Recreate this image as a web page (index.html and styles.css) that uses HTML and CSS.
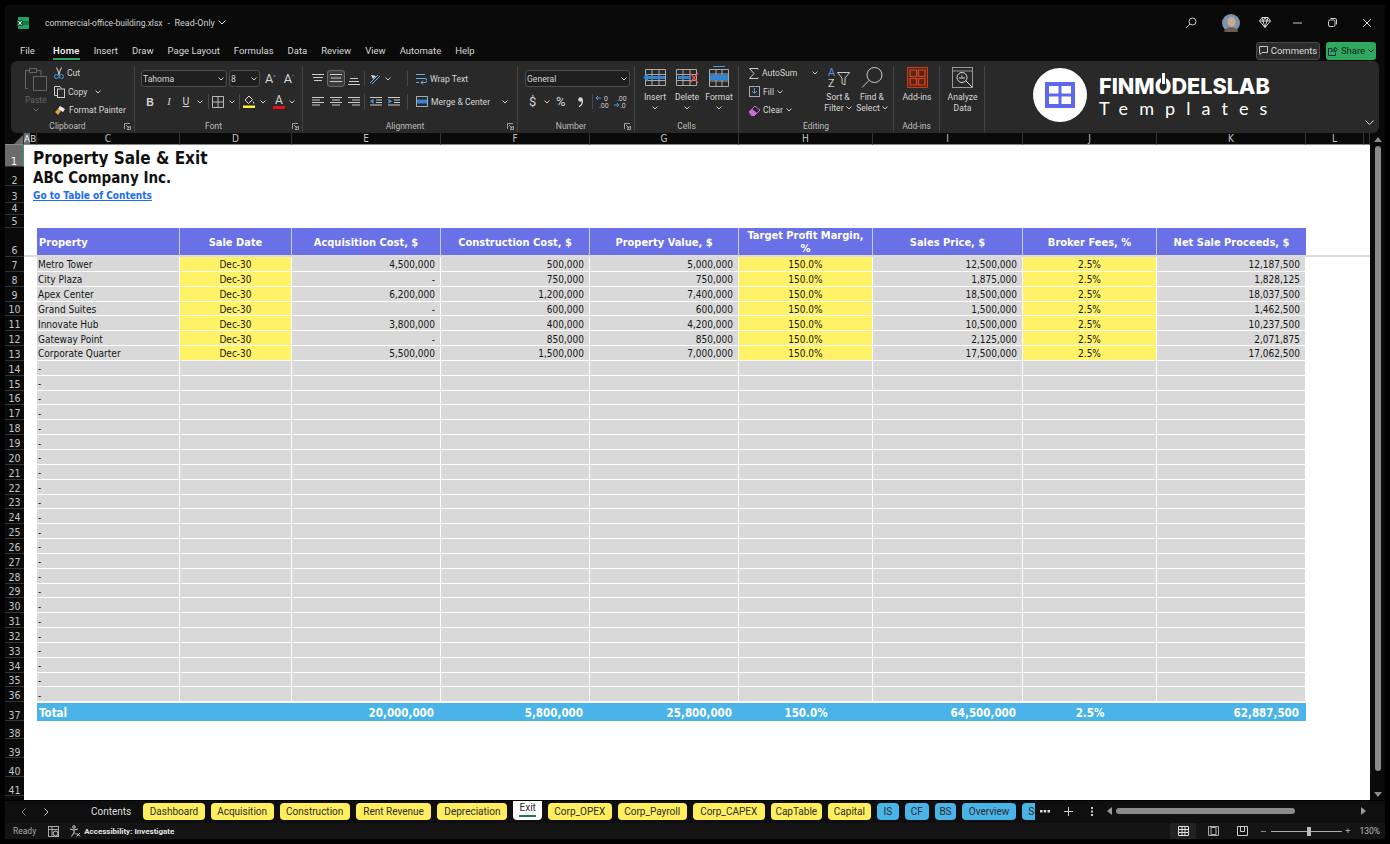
FILE: index.html
```html
<!DOCTYPE html>
<html lang="en">
<head>
  <meta charset="UTF-8">
  <title>commercial-office-building.xlsx</title>
  <link rel="stylesheet" href="styles.css">
</head>
<body>
  <div class="window">

    <!-- title bar -->
    <header class="titlebar">
      <svg class="xl-icon" width="12" height="12" viewBox="0 0 12 12"><rect x="1" width="11" height="12" rx="1" fill="#21a366"/><rect x="1" y="4" width="11" height="4" fill="#107c41"/><rect y="3" width="6" height="6" fill="#185c37"/><path d="M1.5 4.2l3 3.6M4.5 4.2l-3 3.6" stroke="#fff" fill="none"/></svg>
      <span class="doc-name">commercial-office-building.xlsx</span>
      <span class="doc-state">-&nbsp; Read-Only</span>
      <svg class="chev-big" width="8" height="5" viewBox="0 0 8 5"><path d="M.5.5L4 4 7.5.5" fill="none" stroke="#ddd"/></svg>
      <div class="title-right">
        <svg class="tb-search" width="12" height="12" viewBox="0 0 12 12"><circle cx="7.5" cy="4.5" r="3.5" fill="none" stroke="#ccc"/><path d="M5 7l-4 4" stroke="#ccc"/></svg>
        <svg class="tb-avatar" width="18" height="18" viewBox="0 0 18 18"><circle cx="9" cy="9" r="9" fill="#7d95ad"/><ellipse cx="9.5" cy="8" rx="4" ry="5" fill="#c9ab93"/><path d="M2 17c2-5 12-5 14 0a9 9 0 0 1-14 0z" fill="#6e5b50"/></svg>
        <svg class="tb-gem" width="12" height="11" viewBox="0 0 12 11"><path d="M3 .5h6L11.500 4 6 10.500.5 4zM.5 4h11M4 4l2 6.500L8 4M3 .5L4 4l2-3.500L8 4 9 .5" fill="none" stroke="#e6e6e6" stroke-width=".9"/></svg>
        <svg class="tb-min" width="9" height="2" viewBox="0 0 9 2"><path d="M0 1h9" stroke="#ccc"/></svg>
        <svg class="tb-max" width="9" height="9" viewBox="0 0 9 9"><rect x=".5" y="2" width="6.500" height="6.500" rx="1.500" fill="none" stroke="#ccc"/><path d="M2.500.5h4.500a1.500 1.500 0 0 1 1.500 1.500v4.500" fill="none" stroke="#ccc"/></svg>
        <svg class="tb-close" width="10" height="10" viewBox="0 0 10 10"><path d="M1 1l8 8M9 1l-8 8" stroke="#ddd"/></svg>
      </div>
    </header>

    <!-- menu tabs -->
    <nav class="menubar">
      <a class="m-file">File</a>
      <a class="m-home">Home</a>
      <a>Insert</a>
      <a>Draw</a>
      <a>Page Layout</a>
      <a>Formulas</a>
      <a>Data</a>
      <a>Review</a>
      <a>View</a>
      <a>Automate</a>
      <a>Help</a>
      <div class="menu-actions">
        <button class="btn-comments"><svg width="9" height="9" viewBox="0 0 9 9"><path d="M.5.5h8v6H3L1 8.500V6.500H.5z" fill="none" stroke="#ddd" stroke-width=".9"/></svg>Comments</button>
        <button class="btn-share"><svg width="10" height="10" viewBox="0 0 10 10"><path d="M4 2.500H.5v7h7V6.500M3 6c.5-2 2-3 4-3V1l2.500 2.500L7 6V4.500C5.500 4.500 4 5 3 6z" fill="none" stroke="#123" stroke-width=".9"/></svg>Share<svg width="6" height="4" viewBox="0 0 6 4"><path d="M.5.5L3 3 5.500.5" fill="none" stroke="#123"/></svg></button>
      </div>
    </nav>

    <!-- ribbon -->
    <section class="ribbon">

      <div class="group g-clipboard">
        <div class="g-body">
          <div class="paste">
            <svg width="22" height="23" viewBox="0 0 22 23"><path d="M3 20.500H.5v-18h4M12 2.500h4v5" fill="none" stroke="#666"/><rect x="4.500" y=".5" width="7" height="4" fill="none" stroke="#666"/><rect x="8.500" y="8.500" width="13" height="14" fill="none" stroke="#666"/></svg>
            <span>Paste</span>
            <svg width="6" height="4" viewBox="0 0 6 4"><path d="M.5.5L3 3 5.500.5" fill="none" stroke="#666"/></svg>
          </div>
          <div class="clip-rows">
            <div class="clip-row"><svg width="10" height="12" viewBox="0 0 10 12"><path d="M2.500.5l3 7M7.500.5l-3 7" stroke="#ddd" fill="none"/><circle cx="2.500" cy="9.500" r="2" fill="none" stroke="#4a9be0"/><circle cx="7.500" cy="9.500" r="2" fill="none" stroke="#4a9be0"/></svg>Cut</div>
            <div class="clip-row"><svg width="11" height="12" viewBox="0 0 11 12"><path d="M3 9.500H.5v-9H6l1.500 2" fill="none" stroke="#ccc"/><rect x="3.500" y="3" width="7" height="8.500" fill="none" stroke="#ccc"/></svg>Copy<svg class="copy-chev" width="6" height="4" viewBox="0 0 6 4"><path d="M.5.5L3 3 5.500.5" fill="none" stroke="#ccc"/></svg></div>
            <div class="clip-row"><svg width="12" height="11" viewBox="0 0 12 11"><path d="M6 1l5 3-2 3-5-3z" fill="#eee"/><path d="M4 4L1 7l3 3 3-4z" fill="#e8a33d"/></svg>Format Painter</div>
          </div>
        </div>
        <div class="g-label">Clipboard<svg class="launcher" width="7" height="7" viewBox="0 0 7 7"><path d="M.5 6V.5H6M6.500 3v3.500H3M2 2l3 3M5 3v2H3" fill="none" stroke="#bbb" stroke-width=".8"/></svg></div>
      </div>

      <div class="group g-font">
        <div class="g-body rows">
          <div class="row r-font1">
            <div class="combo c-font">Tahoma<svg width="6" height="4" viewBox="0 0 6 4"><path d="M.5.5L3 3 5.500.5" fill="none" stroke="#ccc"/></svg></div>
            <div class="combo c-size">8<svg width="6" height="4" viewBox="0 0 6 4"><path d="M.5.5L3 3 5.500.5" fill="none" stroke="#ccc"/></svg></div>
            <span class="grow-a">A<small>^</small></span>
            <span class="shrink-a">A<small>ˇ</small></span>
          </div>
          <div class="row r-font2">
            <b>B</b><i>I</i><u>U</u>
            <svg class="chev c-u" width="6" height="4" viewBox="0 0 6 4"><path d="M.5.5L3 3 5.500.5" fill="none" stroke="#ccc"/></svg>
            <span class="vsep"></span>
            <svg width="12" height="12" viewBox="0 0 12 12"><path d="M.5.5h11v11H.5zM6 .5v11M.5 6h11" fill="none" stroke="#bbb"/></svg>
            <svg class="chev" width="6" height="4" viewBox="0 0 6 4"><path d="M.5.5L3 3 5.500.5" fill="none" stroke="#ccc"/></svg>
            <span class="vsep"></span>
            <svg width="12" height="13" viewBox="0 0 12 13"><path d="M6 1L2 5l3.500 3.500 4-4zM10 6.500l1 2" fill="none" stroke="#ddd"/><rect y="10.500" width="12" height="2.500" fill="#ffef3a"/></svg>
            <svg class="chev" width="6" height="4" viewBox="0 0 6 4"><path d="M.5.5L3 3 5.500.5" fill="none" stroke="#ccc"/></svg>
            <span class="color-a">A</span>
            <svg class="chev c-a" width="6" height="4" viewBox="0 0 6 4"><path d="M.5.5L3 3 5.500.5" fill="none" stroke="#ccc"/></svg>
          </div>
        </div>
        <div class="g-label">Font<svg class="launcher" width="7" height="7" viewBox="0 0 7 7"><path d="M.5 6V.5H6M6.500 3v3.500H3M2 2l3 3M5 3v2H3" fill="none" stroke="#bbb" stroke-width=".8"/></svg></div>
      </div>

      <div class="group g-align">
        <div class="g-body rows">
          <div class="row r-al1">
            <span class="al-btn"><svg width="12" height="9" viewBox="0 0 12 9"><path d="M0 .5h12M1 3.500h10M2 6.500h8" stroke="#ccc"/></svg></span>
            <span class="al-btn on"><svg width="12" height="9" viewBox="0 0 12 9"><path d="M0 .5h12M1 4h10M0 7.500h12" stroke="#ccc"/></svg></span>
            <span class="al-btn low"><svg width="12" height="9" viewBox="0 0 12 9"><path d="M2 2.500h8M1 5.500h10M0 8.500h12" stroke="#ccc"/></svg></span>
            <span class="vsep"></span>
            <svg class="al-orient" width="12" height="12" viewBox="0 0 12 12"><path d="M1 10l8-8M3 11l8-8" stroke="#6ab0e8" fill="none"/><path d="M2 2l5 1-3 3z" fill="#ddd"/></svg>
            <svg class="chev" width="6" height="4" viewBox="0 0 6 4"><path d="M.5.5L3 3 5.500.5" fill="none" stroke="#ccc"/></svg>
            <span class="vsep"></span>
            <span class="text-btn"><svg width="11" height="12" viewBox="0 0 11 12"><path d="M0 1.500h9M0 5.500h9a2 2 0 0 1 0 4H5M7 7.500L5 9.500l2 2M0 9.500h3" fill="none" stroke="#6ab0e8"/></svg>Wrap Text</span>
          </div>
          <div class="row r-al2">
            <span class="al-btn"><svg width="12" height="9" viewBox="0 0 12 9"><path d="M0 .5h12M0 3h8M0 5.500h12M0 8h8" stroke="#ccc"/></svg></span>
            <span class="al-btn"><svg width="12" height="9" viewBox="0 0 12 9"><path d="M0 .5h12M2 3h8M0 5.500h12M2 8h8" stroke="#ccc"/></svg></span>
            <span class="al-btn"><svg width="12" height="9" viewBox="0 0 12 9"><path d="M0 .5h12M4 3h8M0 5.500h12M4 8h8" stroke="#ccc"/></svg></span>
            <span class="vsep"></span>
            <svg class="al-indent" width="12" height="9" viewBox="0 0 12 9"><path d="M0 .5h12M6 3h6M6 5.500h6M0 8h12" stroke="#ccc"/><path d="M0 4.200l3.500-2.500v5z" fill="#4a9be0"/></svg>
            <svg class="al-indent" width="12" height="9" viewBox="0 0 12 9"><path d="M0 .5h12M6 3h6M6 5.500h6M0 8h12" stroke="#ccc"/><path d="M4 4.200L.5 1.700v5z" fill="#4a9be0"/></svg>
            <span class="vsep"></span>
            <span class="text-btn merge"><svg width="12" height="11" viewBox="0 0 12 11"><rect x=".5" y=".5" width="11" height="10" fill="none" stroke="#aaa"/><rect x="1" y="3.500" width="10" height="4" fill="#2f86d6"/></svg>Merge &amp; Center<svg class="chev" width="6" height="4" viewBox="0 0 6 4"><path d="M.5.5L3 3 5.500.5" fill="none" stroke="#ccc"/></svg></span>
          </div>
        </div>
        <div class="g-label">Alignment<svg class="launcher" width="7" height="7" viewBox="0 0 7 7"><path d="M.5 6V.5H6M6.500 3v3.500H3M2 2l3 3M5 3v2H3" fill="none" stroke="#bbb" stroke-width=".8"/></svg></div>
      </div>

      <div class="group g-number">
        <div class="g-body rows">
          <div class="row"><div class="combo c-num">General<svg width="6" height="4" viewBox="0 0 6 4"><path d="M.5.5L3 3 5.500.5" fill="none" stroke="#ccc"/></svg></div></div>
          <div class="row r-num2">
            <span class="sym s-dollar">$</span>
            <svg class="chev" width="6" height="4" viewBox="0 0 6 4"><path d="M.5.5L3 3 5.500.5" fill="none" stroke="#ccc"/></svg>
            <span class="sym s-pct">%</span>
            <svg class="s-comma" width="5" height="10" viewBox="0 0 5 10"><circle cx="2.500" cy="2.500" r="2.300" fill="#d6d6d6"/><path d="M4.600 3C4.600 6 3.500 8.500 1 9.800" fill="none" stroke="#d6d6d6" stroke-width="1.300"/></svg>
            <span class="vsep"></span>
            <svg class="dec d-inc" width="14" height="13" viewBox="0 0 14 13" overflow="visible"><path d="M0 3h5M2 1L0 3l2 2" fill="none" stroke="#4a9be0"/><text x="8" y="6" font-size="7" fill="#ccc" font-family="Roboto">0</text><text x="3" y="12.500" font-size="7" fill="#ccc" font-family="Roboto">.00</text></svg>
            <svg class="dec d-dec" width="14" height="13" viewBox="0 0 14 13" overflow="visible"><text x="3" y="6" font-size="7" fill="#ccc" font-family="Roboto">.00</text><path d="M0 10h5M3 8l2 2-2 2" fill="none" stroke="#4a9be0"/><text x="6" y="12.500" font-size="7" fill="#ccc" font-family="Roboto">.0</text></svg>
          </div>
        </div>
        <div class="g-label">Number<svg class="launcher" width="7" height="7" viewBox="0 0 7 7"><path d="M.5 6V.5H6M6.500 3v3.500H3M2 2l3 3M5 3v2H3" fill="none" stroke="#bbb" stroke-width=".8"/></svg></div>
      </div>

      <div class="group g-cells">
        <div class="g-body big-row">
          <div class="big-btn">
            <svg width="24" height="22" viewBox="0 0 24 22"><path d="M2.500 3.500h20v16h-20zM2.500 8.500h20M2.500 14.500h20M9 3.500v16M16 3.500v16" fill="none" stroke="#aaa"/><path d="M0 11.500l5-4v2.500h17v3H5v2.500z" fill="#2f86d6"/></svg>
            <span>Insert</span>
            <svg width="6" height="4" viewBox="0 0 6 4"><path d="M.5.5L3 3 5.500.5" fill="none" stroke="#ccc"/></svg>
          </div>
          <div class="big-btn">
            <svg width="24" height="22" viewBox="0 0 24 22"><path d="M1.500 3.500h20v16h-20zM1.500 8.500h20M1.500 14.500h20M8 3.500v16M15 3.500v16" fill="none" stroke="#aaa"/><rect x="3" y="10" width="13" height="3" fill="#2f86d6"/><path d="M15 7l8 10M23 7l-8 10" stroke="#e0574a" stroke-width="1.300"/></svg>
            <span>Delete</span>
            <svg width="6" height="4" viewBox="0 0 6 4"><path d="M.5.5L3 3 5.500.5" fill="none" stroke="#ccc"/></svg>
          </div>
          <div class="big-btn b-format">
            <svg width="22" height="22" viewBox="0 0 22 22"><path d="M5 .5h12" stroke="#4a9be0"/><path d="M1.500 3.500h19v17h-19zM1.500 8h19M1.500 15h19M8 3.500v17M14 3.500v17" fill="none" stroke="#aaa"/><rect x="2" y="9" width="18" height="5" fill="#2f86d6"/></svg>
            <span>Format</span>
            <svg width="6" height="4" viewBox="0 0 6 4"><path d="M.5.5L3 3 5.500.5" fill="none" stroke="#ccc"/></svg>
          </div>
        </div>
        <div class="g-label">Cells</div>
      </div>

      <div class="group g-editing">
        <div class="g-body big-row">
          <div class="edit-rows">
            <div class="clip-row"><svg width="10" height="11" viewBox="0 0 10 11"><path d="M9 1.500V.5H.5L5 5.500.5 10.500H9V9.500" fill="none" stroke="#ccc"/></svg>AutoSum<svg class="sum-chev" width="6" height="4" viewBox="0 0 6 4"><path d="M.5.5L3 3 5.500.5" fill="none" stroke="#ccc"/></svg></div>
            <div class="clip-row"><svg width="11" height="11" viewBox="0 0 11 11"><rect x=".5" y=".5" width="10" height="10" fill="none" stroke="#aaa"/><path d="M5.500 2v5M3 5l2.500 2.500L8 5" fill="none" stroke="#4a9be0"/></svg>Fill<svg width="6" height="4" viewBox="0 0 6 4"><path d="M.5.5L3 3 5.500.5" fill="none" stroke="#ccc"/></svg></div>
            <div class="clip-row"><svg width="11" height="11" viewBox="0 0 11 11"><path d="M0 7l6-6 5 4-6 6H3z" fill="none" stroke="#c86dd7"/><path d="M0 7l3-3 5 4-3 3H3z" fill="#c86dd7"/></svg>Clear<svg width="6" height="4" viewBox="0 0 6 4"><path d="M.5.5L3 3 5.500.5" fill="none" stroke="#ccc"/></svg></div>
          </div>
          <div class="big-btn b-sort">
            <svg width="23" height="22" viewBox="0 0 23 22" overflow="visible"><text x="1" y="10" font-size="11" fill="#4a9be0" font-family="Roboto">A</text><text x="1" y="21" font-size="11" fill="#ccc" font-family="Roboto">Z</text><path d="M10.500 6.500h12L18 12v7l-3-1.500V12z" fill="none" stroke="#ccc"/></svg>
            <span>Sort &amp;</span>
            <span>Filter <svg width="6" height="4" viewBox="0 0 6 4"><path d="M.5.5L3 3 5.500.5" fill="none" stroke="#ccc"/></svg></span>
          </div>
          <div class="big-btn b-find">
            <svg width="22" height="22" viewBox="0 0 22 22"><circle cx="13.500" cy="9" r="7.500" fill="none" stroke="#ccc"/><path d="M8 14.500L1 21.500" stroke="#ccc"/></svg>
            <span>Find &amp;</span>
            <span>Select <svg width="6" height="4" viewBox="0 0 6 4"><path d="M.5.5L3 3 5.500.5" fill="none" stroke="#ccc"/></svg></span>
          </div>
        </div>
        <div class="g-label">Editing</div>
      </div>

      <div class="group g-addins">
        <div class="g-body big-row">
          <div class="big-btn b-wide">
            <svg width="21" height="22" viewBox="0 0 21 22"><path d="M.5 1.500h20v20H.5z" fill="#5d2413" stroke="#c2401c"/><path d="M3 4h6.500v6.500H3zM11.500 4H18v6.500h-6.500zM3 12.500h6.500V19H3zM11.500 12.500H18V19h-6.500z" fill="none" stroke="#d2492a" stroke-width="1.200"/></svg>
            <span>Add-ins</span>
          </div>
        </div>
        <div class="g-label">Add-ins</div>
      </div>

      <div class="group g-analyze">
        <div class="g-body big-row">
          <div class="big-btn b-wide">
            <svg width="21" height="22" viewBox="0 0 21 22"><rect x=".5" y="1.500" width="20" height="20" fill="none" stroke="#999"/><path d="M.5 5h20" stroke="#999"/><circle cx="10" cy="11.500" r="5" fill="none" stroke="#ddd"/><path d="M8 13v-2M10 13V9.500M12 13v-2M14 15l6 6" stroke="#ddd"/></svg>
            <span>Analyze</span>
            <span>Data</span>
          </div>
        </div>
      </div>

      <div class="brand">
        <div class="brand-badge">
          <svg width="30" height="26" viewBox="0 0 30 26"><rect width="30" height="26" fill="#5d68ee"/><rect x="4" y="4" width="9.500" height="7.500" fill="#fff"/><rect x="16.500" y="4" width="9.500" height="7.500" fill="#fff"/><rect x="4" y="14.500" width="9.500" height="7.500" fill="#fff"/><rect x="16.500" y="14.500" width="9.500" height="7.500" fill="#fff"/></svg>
        </div>
        <div class="brand-text">
          <div class="brand-name">FINM<span class="power">O</span>DELSLAB</div>
          <div class="brand-sub">Templates</div>
        </div>
        <svg class="collapse" width="9" height="5" viewBox="0 0 9 5"><path d="M.5.5l4 4 4-4" fill="none" stroke="#ddd"/></svg>
      </div>
    </section>

    <!-- worksheet -->
    <main class="sheet">
      <div class="grid-wrap">
        <table class="grid">
          <colgroup>
            <col class="w-rh"><col class="w-ab"><col class="w-c"><col class="w-d"><col class="w-e"><col class="w-f"><col class="w-g"><col class="w-h"><col class="w-i"><col class="w-j"><col class="w-k"><col class="w-l"><col class="w-m">
          </colgroup>
          <tr class="letters">
            <th class="corner"><svg width="9" height="9" viewBox="0 0 9 9"><path d="M9 0v9H0z" fill="#6a6a6a"/></svg></th>
            <th class="ab"><span>A</span>B</th><th>C</th><th>D</th><th>E</th><th>F</th><th>G</th><th>H</th><th>I</th><th>J</th><th>K</th><th>L</th><th></th>
          </tr>
          <tr class="r1"><th class="rn sel">1</th><td colspan="12" class="t1">Property Sale &amp; Exit</td></tr>
          <tr class="r2"><th class="rn">2</th><td colspan="12" class="t2">ABC Company Inc.</td></tr>
          <tr class="r3"><th class="rn">3</th><td colspan="12" class="t3"><a>Go to Table of Contents</a></td></tr>
          <tr class="r4"><th class="rn">4</th><td colspan="12"></td></tr>
          <tr class="r5"><th class="rn">5</th><td colspan="12"></td></tr>
          <tr class="r6"><th class="rn">6</th><td></td>
            <td class="hd left">Property</td><td class="hd">Sale Date</td><td class="hd">Acquisition Cost, $</td><td class="hd">Construction Cost, $</td><td class="hd">Property Value, $</td><td class="hd">Target Profit Margin,<br>%</td><td class="hd">Sales Price, $</td><td class="hd">Broker Fees, %</td><td class="hd">Net Sale Proceeds, $</td><td></td><td></td></tr>

          <tr class="dr"><th class="rn">7</th><td class="b"></td><td>Metro Tower</td><td class="in">Dec-30</td><td class="n">4,500,000</td><td class="n">500,000</td><td class="n">5,000,000</td><td class="in">150.0%</td><td class="n">12,500,000</td><td class="in">2.5%</td><td class="n">12,187,500</td><td class="b"></td><td class="b"></td></tr>
          <tr class="dr"><th class="rn">8</th><td class="b"></td><td>City Plaza</td><td class="in">Dec-30</td><td class="n">-</td><td class="n">750,000</td><td class="n">750,000</td><td class="in">150.0%</td><td class="n">1,875,000</td><td class="in">2.5%</td><td class="n">1,828,125</td><td class="b"></td><td class="b"></td></tr>
          <tr class="dr"><th class="rn">9</th><td class="b"></td><td>Apex Center</td><td class="in">Dec-30</td><td class="n">6,200,000</td><td class="n">1,200,000</td><td class="n">7,400,000</td><td class="in">150.0%</td><td class="n">18,500,000</td><td class="in">2.5%</td><td class="n">18,037,500</td><td class="b"></td><td class="b"></td></tr>
          <tr class="dr"><th class="rn">10</th><td class="b"></td><td>Grand Suites</td><td class="in">Dec-30</td><td class="n">-</td><td class="n">600,000</td><td class="n">600,000</td><td class="in">150.0%</td><td class="n">1,500,000</td><td class="in">2.5%</td><td class="n">1,462,500</td><td class="b"></td><td class="b"></td></tr>
          <tr class="dr"><th class="rn">11</th><td class="b"></td><td>Innovate Hub</td><td class="in">Dec-30</td><td class="n">3,800,000</td><td class="n">400,000</td><td class="n">4,200,000</td><td class="in">150.0%</td><td class="n">10,500,000</td><td class="in">2.5%</td><td class="n">10,237,500</td><td class="b"></td><td class="b"></td></tr>
          <tr class="dr"><th class="rn">12</th><td class="b"></td><td>Gateway Point</td><td class="in">Dec-30</td><td class="n">-</td><td class="n">850,000</td><td class="n">850,000</td><td class="in">150.0%</td><td class="n">2,125,000</td><td class="in">2.5%</td><td class="n">2,071,875</td><td class="b"></td><td class="b"></td></tr>
          <tr class="dr"><th class="rn">13</th><td class="b"></td><td>Corporate Quarter</td><td class="in">Dec-30</td><td class="n">5,500,000</td><td class="n">1,500,000</td><td class="n">7,000,000</td><td class="in">150.0%</td><td class="n">17,500,000</td><td class="in">2.5%</td><td class="n">17,062,500</td><td class="b"></td><td class="b"></td></tr>

          <tr class="dr"><th class="rn">14</th><td class="b"></td><td>-</td><td></td><td></td><td></td><td></td><td></td><td></td><td></td><td></td><td class="b"></td><td class="b"></td></tr>
          <tr class="dr"><th class="rn">15</th><td class="b"></td><td>-</td><td></td><td></td><td></td><td></td><td></td><td></td><td></td><td></td><td class="b"></td><td class="b"></td></tr>
          <tr class="dr"><th class="rn">16</th><td class="b"></td><td>-</td><td></td><td></td><td></td><td></td><td></td><td></td><td></td><td></td><td class="b"></td><td class="b"></td></tr>
          <tr class="dr"><th class="rn">17</th><td class="b"></td><td>-</td><td></td><td></td><td></td><td></td><td></td><td></td><td></td><td></td><td class="b"></td><td class="b"></td></tr>
          <tr class="dr"><th class="rn">18</th><td class="b"></td><td>-</td><td></td><td></td><td></td><td></td><td></td><td></td><td></td><td></td><td class="b"></td><td class="b"></td></tr>
          <tr class="dr"><th class="rn">19</th><td class="b"></td><td>-</td><td></td><td></td><td></td><td></td><td></td><td></td><td></td><td></td><td class="b"></td><td class="b"></td></tr>
          <tr class="dr"><th class="rn">20</th><td class="b"></td><td>-</td><td></td><td></td><td></td><td></td><td></td><td></td><td></td><td></td><td class="b"></td><td class="b"></td></tr>
          <tr class="dr"><th class="rn">21</th><td class="b"></td><td>-</td><td></td><td></td><td></td><td></td><td></td><td></td><td></td><td></td><td class="b"></td><td class="b"></td></tr>
          <tr class="dr"><th class="rn">22</th><td class="b"></td><td>-</td><td></td><td></td><td></td><td></td><td></td><td></td><td></td><td></td><td class="b"></td><td class="b"></td></tr>
          <tr class="dr"><th class="rn">23</th><td class="b"></td><td>-</td><td></td><td></td><td></td><td></td><td></td><td></td><td></td><td></td><td class="b"></td><td class="b"></td></tr>
          <tr class="dr"><th class="rn">24</th><td class="b"></td><td>-</td><td></td><td></td><td></td><td></td><td></td><td></td><td></td><td></td><td class="b"></td><td class="b"></td></tr>
          <tr class="dr"><th class="rn">25</th><td class="b"></td><td>-</td><td></td><td></td><td></td><td></td><td></td><td></td><td></td><td></td><td class="b"></td><td class="b"></td></tr>
          <tr class="dr"><th class="rn">26</th><td class="b"></td><td>-</td><td></td><td></td><td></td><td></td><td></td><td></td><td></td><td></td><td class="b"></td><td class="b"></td></tr>
          <tr class="dr"><th class="rn">27</th><td class="b"></td><td>-</td><td></td><td></td><td></td><td></td><td></td><td></td><td></td><td></td><td class="b"></td><td class="b"></td></tr>
          <tr class="dr"><th class="rn">28</th><td class="b"></td><td>-</td><td></td><td></td><td></td><td></td><td></td><td></td><td></td><td></td><td class="b"></td><td class="b"></td></tr>
          <tr class="dr"><th class="rn">29</th><td class="b"></td><td>-</td><td></td><td></td><td></td><td></td><td></td><td></td><td></td><td></td><td class="b"></td><td class="b"></td></tr>
          <tr class="dr"><th class="rn">30</th><td class="b"></td><td>-</td><td></td><td></td><td></td><td></td><td></td><td></td><td></td><td></td><td class="b"></td><td class="b"></td></tr>
          <tr class="dr"><th class="rn">31</th><td class="b"></td><td>-</td><td></td><td></td><td></td><td></td><td></td><td></td><td></td><td></td><td class="b"></td><td class="b"></td></tr>
          <tr class="dr"><th class="rn">32</th><td class="b"></td><td>-</td><td></td><td></td><td></td><td></td><td></td><td></td><td></td><td></td><td class="b"></td><td class="b"></td></tr>
          <tr class="dr"><th class="rn">33</th><td class="b"></td><td>-</td><td></td><td></td><td></td><td></td><td></td><td></td><td></td><td></td><td class="b"></td><td class="b"></td></tr>
          <tr class="dr"><th class="rn">34</th><td class="b"></td><td>-</td><td></td><td></td><td></td><td></td><td></td><td></td><td></td><td></td><td class="b"></td><td class="b"></td></tr>
          <tr class="dr"><th class="rn">35</th><td class="b"></td><td>-</td><td></td><td></td><td></td><td></td><td></td><td></td><td></td><td></td><td class="b"></td><td class="b"></td></tr>
          <tr class="dr"><th class="rn">36</th><td class="b"></td><td>-</td><td></td><td></td><td></td><td></td><td></td><td></td><td></td><td></td><td class="b"></td><td class="b"></td></tr>

          <tr class="r37"><th class="rn">37</th><td></td><td class="tot left">Total</td><td class="tot"></td><td class="tot">20,000,000</td><td class="tot">5,800,000</td><td class="tot">25,800,000</td><td class="tot mid">150.0%</td><td class="tot">64,500,000</td><td class="tot mid">2.5%</td><td class="tot">62,887,500</td><td></td><td></td></tr>
          <tr class="r38"><th class="rn">38</th><td colspan="12"></td></tr>
          <tr class="r39"><th class="rn">39</th><td colspan="12"></td></tr>
          <tr class="r39"><th class="rn">40</th><td colspan="12"></td></tr>
          <tr class="r39"><th class="rn">41</th><td colspan="12"></td></tr>
          <tr class="r42"><th class="rn"></th><td colspan="12"></td></tr>
        </table>
      </div>
      <div class="vscroll">
        <svg width="8" height="5" viewBox="0 0 8 5"><path d="M4 0l4 5H0z" fill="#8a8a8a"/></svg>
        <div class="vthumb"></div>
        <svg width="8" height="5" viewBox="0 0 8 5"><path d="M4 5L0 0h8z" fill="#8a8a8a"/></svg>
      </div>
    </main>

    <!-- sheet tabs -->
    <footer class="tabbar">
      <svg class="nav-l" width="5" height="8" viewBox="0 0 5 8"><path d="M4.500.5L1 4l3.500 3.500" fill="none" stroke="#888"/></svg>
      <svg class="nav-r" width="5" height="8" viewBox="0 0 5 8"><path d="M.5.5L4 4 .5 7.500" fill="none" stroke="#ccc"/></svg>
      <div class="tabs">
        <span class="tab plain">Contents</span>
        <span class="tab y">Dashboard</span>
        <span class="tab y">Acquisition</span>
        <span class="tab y">Construction</span>
        <span class="tab y wide">Rent Revenue</span>
        <span class="tab y roomy">Depreciation</span>
        <span class="tab active"><em>Exit</em></span>
        <span class="tab y">Corp_OPEX</span>
        <span class="tab y">Corp_Payroll</span>
        <span class="tab y wide">Corp_CAPEX</span>
        <span class="tab y tight">CapTable</span>
        <span class="tab y snug">Capital</span>
        <span class="tab bl">IS</span>
        <span class="tab bl snug">CF</span>
        <span class="tab bl tight">BS</span>
        <span class="tab bl">Overview</span>
        <span class="tab bl">Summary</span>
      </div>
      <svg class="more" width="10" height="3" viewBox="0 0 10 3"><path d="M0 0h2.500v2.500H0zM3.700 0h2.500v2.500H3.700zM7.500 0H10v2.500H7.500z" fill="#ddd"/></svg>
      <svg class="plus" width="9" height="9" viewBox="0 0 9 9"><path d="M4.500 0v9M0 4.500h9" stroke="#ccc"/></svg>
      <svg class="kebab" width="2" height="9" viewBox="0 0 2 9"><path d="M0 0h2v2H0zM0 3.500h2v2H0zM0 7h2v2H0z" fill="#ccc"/></svg>
      <div class="hscroll">
        <svg width="5" height="8" viewBox="0 0 5 8"><path d="M0 4l5-4v8z" fill="#999"/></svg>
        <div class="hthumb"></div>
        <svg width="5" height="8" viewBox="0 0 5 8"><path d="M5 4L0 0v8z" fill="#999"/></svg>
      </div>
    </footer>

    <!-- status bar -->
    <div class="statusbar">
      <span class="st-ready">Ready</span>
      <svg class="st-macro" width="11" height="11" viewBox="0 0 11 11"><rect x=".5" y=".5" width="10" height="10" fill="none" stroke="#aaa"/><path d="M.5 3.500h10M4 .5v10" stroke="#aaa"/><circle cx="7.500" cy="7.500" r="2.500" fill="#222" stroke="#ccc"/></svg>
      <svg class="st-acc" width="12" height="12" viewBox="0 0 12 12"><circle cx="5" cy="2" r="1.300" fill="none" stroke="#ccc"/><path d="M1 4l4 1 4-1M5 5v2.500L2.500 11.500M5 7.500l2 2" fill="none" stroke="#ccc"/><path d="M7.500 8l3.500 3.500M11 8l-3.500 3.500" stroke="#ccc"/></svg>
      <span class="st-access">Accessibility: Investigate</span>
      <div class="st-right">
        <span class="view-on"><svg width="11" height="10" viewBox="0 0 11 10"><path d="M.5.5h10v9H.5zM.5 3.500h10M.5 6.500h10M4 .5v9M7 .5v9" fill="none" stroke="#ddd"/></svg></span>
        <svg class="view" width="11" height="10" viewBox="0 0 11 10"><path d="M.5.5h10v9H.5z" fill="none" stroke="#aaa"/><rect x="3" y="1.500" width="5" height="7" fill="none" stroke="#aaa"/></svg>
        <svg class="view" width="11" height="10" viewBox="0 0 11 10"><path d="M.5.5h10v9H.5zM3.500.5v5h4v-5" fill="none" stroke="#ccc"/></svg>
        <span class="zoom-minus"></span>
        <div class="slider"><i></i></div>
        <span class="zoom-plus">+</span>
        <span class="zoom-val">130%</span>
      </div>
    </div>
  </div>
</body>
</html>
```

FILE: styles.css
```css
* {
  box-sizing: border-box;
}

html, body {
  margin: 0;
  height: 844px;
  overflow: hidden;
  background: #000;
}

body {
  padding: 5px;
  font-family: Roboto, "Noto Sans", sans-serif;
  font-size: 9px;
  color: #d6d6d6;
}

svg {
  display: block;
  flex: none;
}

.window {
  width: 1380px;
  height: 834px;
  background: #0a0a0a;
  display: flex;
  flex-direction: column;
}

/* title bar */
.titlebar {
  height: 35px;
  flex: none;
  display: flex;
  align-items: center;
  padding-left: 12px;
  font-size: 9px;
  color: #d0d0d0;
}

.xl-icon {
  margin-right: 16px;
}

.doc-name {
  font-size: 8.500px;
}

.doc-state {
  margin-left: 5px;
}

.chev-big {
  margin-left: 3px;
}

.title-right {
  margin-left: auto;
  display: flex;
  align-items: center;
  padding-right: 13px;
}

.tb-avatar {
  margin-left: 25px;
}

.tb-gem {
  margin-left: 19px;
}

.tb-min {
  margin-left: 22px;
}

.tb-max {
  margin-left: 26px;
}

.tb-close {
  margin-left: 25px;
}

/* menu */
.menubar {
  height: 21px;
  flex: none;
  display: flex;
  align-items: center;
  gap: 14px;
  padding-left: 15px;
  font-size: 9.500px;
  color: #d8d8d8;
}

.menubar a {
  display: block;
  line-height: 15px;
}

.m-home {
  margin-left: 4px;
  color: #fff;
  font-weight: 500;
  letter-spacing: .3px;
  border-bottom: 2px solid #2ea35f;
  padding-top: 2px;
}

.menu-actions {
  margin-left: auto;
  display: flex;
  gap: 6px;
  padding-right: 9px;
}

.menu-actions button {
  height: 18px;
  display: flex;
  align-items: center;
  gap: 3px;
  border-radius: 3px;
  font-family: inherit;
  font-size: 9.500px;
  padding: 0;
  justify-content: center;
}

.btn-comments {
  width: 64px;
  background: #2b2b2b;
  border: 1px solid #4a4a4a;
  color: #dcdcdc;
}

.btn-share {
  width: 50px;
  background: #2fa860;
  border: none;
  color: #0f2a1a;
}

/* ribbon */
.ribbon {
  height: 72px;
  flex: none;
  margin: 0 6px;
  background: #292929;
  border-radius: 6px;
  display: flex;
  padding: 5px 0 1px;
  font-size: 8.600px;
  color: #d6d6d6;
}

.group {
  flex: none;
  display: flex;
  flex-direction: column;
  border-right: 1px solid #444;
}

.g-clipboard { width: 124px; }
.g-font { width: 168px; }
.g-align { width: 215px; }
.g-number { width: 117px; }
.g-cells { width: 104px; }
.g-editing { width: 155px; }
.g-addins { width: 46px; }
.g-analyze { width: 45px; }

.g-body {
  height: 54px;
  flex: none;
}

.g-label {
  height: 12px;
  line-height: 12px;
  text-align: center;
  font-size: 8.500px;
  color: #bdbdbd;
  position: relative;
}

.g-clipboard .g-label,
.g-font .g-label,
.g-align .g-label,
.g-number .g-label {
  padding-right: 10px;
}

.launcher {
  position: absolute;
  right: 3px;
  top: 3px;
}

.rows {
  display: flex;
  flex-direction: column;
  padding-top: 4px;
  gap: 6px;
}

.row {
  height: 17px;
  display: flex;
  align-items: center;
}

.chev {
  margin-left: 4px;
}

.vsep {
  width: 1px;
  height: 15px;
  background: #4a4a4a;
}

/* clipboard */
.g-clipboard .g-body {
  display: flex;
}

.paste {
  width: 43px;
  padding-left: 14px;
  padding-top: 2px;
  display: flex;
  flex-direction: column;
  color: #666;
  font-size: 8.500px;
}

.paste span {
  line-height: 12px;
  margin-top: 3px;
}

.paste svg:last-child {
  margin: 2px 0 0 8px;
}

.clip-rows {
  margin-top: -2px;
  display: flex;
  flex-direction: column;
}

.clip-row {
  height: 18.500px;
  display: flex;
  align-items: center;
  gap: 3px;
  white-space: nowrap;
}

.copy-chev {
  margin-left: 5px;
}

/* font */
.g-font .rows {
  padding-left: 6px;
}

.combo {
  height: 17px;
  border: 1px solid #4d4d4d;
  border-radius: 3px;
  background: #1f1f1f;
  display: flex;
  align-items: center;
  justify-content: space-between;
  padding: 0 2px 0 1px;
  font-size: 8.600px;
}

.c-font { width: 86px; }
.c-size { width: 31px; margin-left: 2px; }
.c-num { width: 105px; margin-left: 7px; }

.grow-a, .shrink-a {
  font-size: 12.500px;
  color: #d6d6d6;
}

.grow-a { margin-left: 5px; }
.shrink-a { margin-left: 8px; }

.grow-a small, .shrink-a small {
  font-size: 6px;
  color: #6ab0e8;
  vertical-align: 4px;
}

.r-font2 {
  padding-left: 5px;
  font-size: 10.500px;
}

.r-font2 b {
  width: 8px;
  text-align: center;
  font-family: "Liberation Sans", sans-serif;
}

.r-font2 i {
  width: 6px;
  margin-left: 12px;
  text-align: center;
  font-family: "Liberation Serif", serif;
}

.r-font2 u {
  width: 8px;
  margin-left: 10px;
  text-align: center;
}

.r-font2 .chev {
  margin-left: 5px;
}

.r-font2 .c-u {
  margin-left: 7px;
}

.r-font2 .vsep {
  margin: 0 3px 0 4px;
}

.r-font2 .c-u + .vsep {
  margin-left: 5px;
}

.color-a {
  margin-left: 7px;
  width: 12px;
  height: 14px;
  line-height: 11px;
  text-align: center;
  font-size: 12px;
  border-bottom: 3px solid #e8101a;
}

.r-font2 .c-a {
  margin-left: 4px;
}

/* alignment */
.g-align .rows {
  padding-left: 6px;
}

.al-btn {
  width: 18px;
  height: 17px;
  display: flex;
  align-items: center;
  justify-content: center;
  border-radius: 3px;
  border: 1px solid transparent;
}

.al-btn.on {
  background: #3d3d3d;
  border-color: #6a6a6a;
}

.al-btn.low svg {
  margin-top: 3px;
}

.g-align .vsep {
  margin-left: 1px;
}

.al-orient {
  margin-left: 4px;
}

.g-align .al-orient + .chev + .vsep {
  margin-left: 16px;
}

.al-orient + .chev {
  margin-left: 4px;
}

.al-indent {
  margin-left: 5px;
}

.al-indent + .al-indent {
  margin-left: 6px;
}

.al-indent + .vsep {
  margin-left: 7px;
}

.text-btn {
  display: flex;
  align-items: center;
  gap: 3px;
  margin-left: 8px;
  white-space: nowrap;
}

.merge .chev {
  margin-left: 9px;
}

/* number */
.r-num2 {
  padding-left: 11px;
  color: #d6d6d6;
}

.sym {
  font-size: 13px;
  line-height: 17px;
}

.s-dollar { width: 8px; }

.r-num2 .chev { margin-left: 7px; }
.s-pct { margin-left: 6px; width: 12px; }
.s-comma { margin-left: 10px; }
.r-num2 .vsep { margin-left: 9px; }
.r-num2 .d-inc { margin-left: 3px; }
.r-num2 .d-dec { margin-left: 4px; }

/* large buttons */
.big-row {
  display: flex;
}

.big-btn {
  display: flex;
  flex-direction: column;
  align-items: center;
  width: 32px;
  line-height: 11px;
  white-space: nowrap;
}

.big-btn > svg:first-child {
  margin-bottom: 3.500px;
}

.big-btn > svg:last-child:not(:first-child) {
  margin-top: 3.500px;
}

.big-btn span svg {
  display: inline-block;
  vertical-align: 1px;
}

.g-cells .big-row {
  padding-left: 4px;
}

.edit-rows {
  width: 85px;
  padding-left: 10px;
  margin-top: -2px;
}

.sum-chev {
  margin-left: 12px;
}

.b-sort { width: 34px; margin-left: -3px; }
.b-find { width: 34px; }
.b-wide { width: 45px; padding-left: 1px; }

/* logo */
.brand {
  flex: 1;
  display: flex;
  align-items: center;
  padding-left: 48px;
  padding-bottom: 8px;
  color: #fff;
  min-width: 0;
}

.brand-badge {
  width: 54px;
  height: 54px;
  border-radius: 50%;
  background: #fff;
  display: flex;
  align-items: center;
  justify-content: center;
  flex: none;
}

.brand-text {
  margin-left: 12px;
  padding-top: 2px;
}

.brand-name {
  font-family: Inter, sans-serif;
  font-weight: 800;
  font-size: 21.600px;
  line-height: 22px;
  white-space: nowrap;
}

.power {
  position: relative;
}

.power::before {
  content: "";
  position: absolute;
  left: 50%;
  top: 0;
  width: 3px;
  height: 11px;
  margin-left: -1.500px;
  background: #fff;
  box-shadow: 0 0 0 1px #292929;
}

.brand-sub {
  font-family: Lato, sans-serif;
  font-weight: 400;
  font-size: 18px;
  line-height: 18px;
  margin-top: 2px;
  letter-spacing: 11.100px;
  white-space: nowrap;
}

.collapse {
  align-self: flex-end;
  margin: 0 5px -1px auto;
}

/* worksheet */
.sheet {
  height: 667px;
  flex: none;
  display: flex;
}

.grid-wrap {
  width: 1365px;
  height: 667px;
  overflow: hidden;
}

.grid {
  width: 1365px;
  table-layout: fixed;
  border-collapse: separate;
  border-spacing: 0;
  font-family: "DejaVu Sans Condensed", "DejaVu Sans", sans-serif;
  font-size: 10px;
  color: #161616;
  background: #fff;
}

.w-rh { width: 19px; }
.w-ab { width: 13px; }
.w-c { width: 143px; }
.w-d { width: 112px; }
.w-e { width: 149px; }
.w-f { width: 149px; }
.w-g { width: 149px; }
.w-h { width: 134px; }
.w-i { width: 150px; }
.w-j { width: 134px; }
.w-k { width: 149px; }
.w-l { width: 58px; }
.w-m { width: 6px; }

.grid td, .grid th {
  padding: 0;
  overflow: hidden;
  white-space: nowrap;
}

.letters {
  height: 12px;
}

.letters th {
  background: #0a0a0a;
  color: #c4c4c4;
  font-weight: 400;
  font-size: 10px;
  line-height: 11px;
  border-right: 1px solid #333;
  border-bottom: 1px solid #8a8a8a;
}

.corner svg {
  margin: 1px 0 0 9px;
}

.letters .ab {
  font-size: 9.500px;
  color: #ddd;
  text-align: left;
  letter-spacing: -.5px;
}

.ab span {
  background: #6b6b6b;
  color: #fff;
  padding-right: 1px;
}

.grid .rn {
  background: #0a0a0a;
  color: #c4c4c4;
  font-weight: 400;
  font-size: 10.500px;
  line-height: 10px;
  vertical-align: bottom;
  text-align: center;
  border-bottom: 1px solid #333;
  padding-bottom: 1px;
}

.grid .r1 .rn,
.grid .r2 .rn,
.grid .r37 .rn,
.grid .r38 .rn,
.grid .r39 .rn {
  padding-bottom: 0;
}

.grid .rn.sel {
  background: #6b6b6b;
  color: #fff;
  border-right: 1px solid #2e9e6b;
}

.r1 { height: 22px; }
.r2 { height: 19px; }
.r3 { height: 17px; }
.r4 { height: 12px; }
.r5 { height: 13px; }
.r6 { height: 29px; }

.t1, .t2, .t3 {
  font-weight: 700;
  color: #111;
}

.grid .t1 {
  font-size: 17px;
  line-height: 18px;
  padding: 3px 0 0 9px;
}

.grid .t2 {
  font-size: 15px;
  line-height: 16px;
  padding: 3px 0 0 9px;
}

.grid .t3 {
  padding: 2px 0 0 9px;
  line-height: 13px;
  font-size: 10px;
  color: #1a6cf5;
}

.t3 a {
  text-decoration: underline;
}

.grid .hd {
  background: #6a70e6;
  color: #fff;
  font-weight: 700;
  font-size: 11px;
  line-height: 13px;
  text-align: center;
  white-space: normal;
  border-right: 1px solid #c9ccf5;
  padding-top: 1px;
}

.grid .hd:nth-child(11) {
  border-right: 0;
}

.grid .hd.left {
  text-align: left;
  padding-left: 2px;
}

.r6 td, .r6 th {
  border-bottom: 2px solid #dcdcdc;
}

.dr {
  height: 14.850px;
}

.grid .dr td {
  background: #d9d9d9;
  line-height: 11px;
  border-right: 1px solid #fff;
  border-bottom: 1px solid #fff;
  padding-top: 2px;
}

.grid .dr td:nth-child(3) {
  padding-left: 1px;
}

.grid .dr td.b {
  background: #fff;
  border: 0;
}

.grid .dr td.in {
  background: #fff266;
  text-align: center;
}

.grid .dr td.n {
  text-align: right;
  padding-right: 5px;
}

.r37 {
  height: 19px;
}

.r37 td {
  border-top: 1px solid #fff;
}

.grid .tot {
  background: #4ab3e8;
  color: #fff;
  font-weight: 700;
  font-size: 11.500px;
  line-height: 14px;
  text-align: right;
  padding: 2px 7px 0 0;
}

.grid .tot.left {
  text-align: left;
  padding-left: 2px;
}

.grid .tot.mid {
  text-align: center;
  padding-right: 0;
}

.r38 { height: 18px; }
.r39 { height: 19px; }
.r42 { height: 5px; }

/* scrollbars */
.vscroll {
  width: 15px;
  height: 667px;
  display: flex;
  flex-direction: column;
  align-items: center;
  padding: 4px 0 3px;
}

.vthumb {
  width: 6px;
  height: 625px;
  margin: 4px 0 auto;
  background: #8a8a8a;
  border-radius: 3px;
}

/* tabs */
.tabbar {
  height: 23px;
  flex: none;
  display: flex;
  align-items: center;
  padding-left: 16px;
  background: #0f0f0f;
  border-top: 1px solid #000;
  font-size: 10px;
}

.nav-r {
  margin-left: 18px;
}

.tabs {
  margin-left: 36px;
  width: 950px;
  flex: none;
  display: flex;
  gap: 6px;
  overflow: hidden;
  height: 22px;
  align-items: flex-start;
  padding-top: 2px;
}

.tab {
  flex: none;
  height: 17px;
  line-height: 17px;
  padding: 0 6.500px;
  border-radius: 4px;
  color: #2c2c2c;
  white-space: nowrap;
}

.tab.tight { padding: 0 4.700px; }
.tab.snug { padding: 0 6px; }
.tab.roomy { padding: 0 7px; }
.tab.wide { padding: 0 7.500px; }

.tab.plain {
  color: #ddd;
  padding: 0 6px;
}

.tab.y { background: #ffef5e; }
.tab.bl { background: #4ab3e8; }

.tab.active {
  background: #fff;
  height: 20px;
  margin-top: -3px;
  border-radius: 0 0 4px 4px;
  padding: 0 6px;
  line-height: 20px;
}

.tab.active em {
  font-style: normal;
  display: block;
  height: 17px;
  line-height: 15px;
  border-bottom: 2px solid #1e7a45;
}

.more {
  margin-left: 5px;
  margin-top: -2px;
}

.plus {
  margin-left: 14px;
  margin-top: -2px;
}

.kebab {
  margin-left: 18px;
  margin-top: -2px;
}

.hscroll {
  margin-left: 13.500px;
  width: 259px;
  display: flex;
  align-items: center;
  gap: 4.500px;
  margin-top: -2px;
}

.hthumb {
  width: 179px;
  height: 6px;
  background: #8a8a8a;
  border-radius: 3px;
  margin-right: auto;
}

/* status bar */
.statusbar {
  height: 16px;
  flex: none;
  display: flex;
  align-items: center;
  padding-left: 8px;
  background: #141414;
  font-size: 8.500px;
  color: #aaa;
}

.st-macro { margin-left: 11.500px; }
.st-acc { margin-left: 10.500px; }

.st-access {
  margin-left: 3px;
  color: #e4e4e4;
  font-weight: 700;
  font-size: 8px;
}

.st-right {
  margin-left: auto;
  display: flex;
  align-items: center;
  height: 16px;
  padding-right: 5px;
}

.view-on {
  width: 26px;
  height: 16px;
  background: #222;
  display: flex;
  align-items: center;
  justify-content: center;
}

.view { margin-left: 12px; }
.view + .view { margin-left: 18px; }

.zoom-minus {
  width: 5px;
  height: 1px;
  background: #888;
  margin-left: 13px;
}

.slider {
  width: 71px;
  height: 1px;
  background: #aaa;
  margin-left: 5px;
  position: relative;
}

.slider i {
  position: absolute;
  left: 36px;
  top: -4px;
  width: 4px;
  height: 9px;
  background: #bbb;
}

.zoom-plus {
  margin-left: 3px;
  font-size: 9px;
  color: #aaa;
}

.zoom-val {
  margin-left: 9px;
  color: #bbb;
}
```
